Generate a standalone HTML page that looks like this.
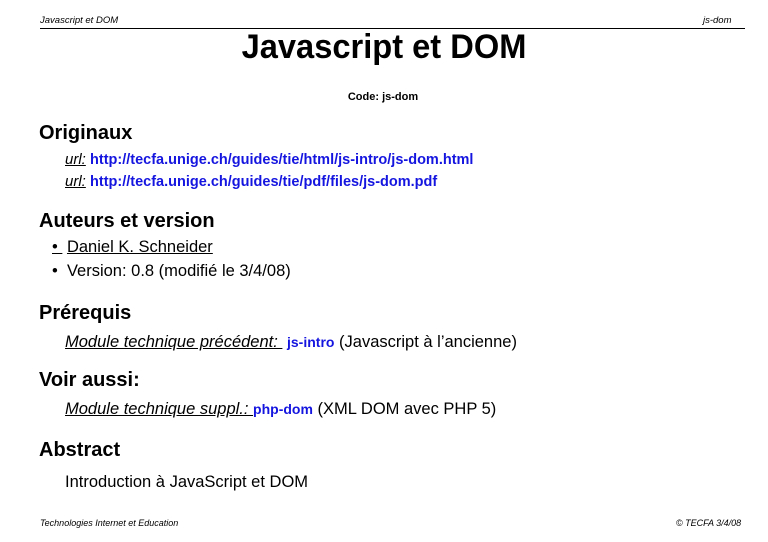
<!DOCTYPE html>
<html><head><meta charset="utf-8"><style>
body{margin:0;width:768px;height:542px;background:#fff;position:relative;font-family:"Liberation Sans",Arial,sans-serif;color:#000;overflow:hidden}
div{position:absolute;white-space:nowrap;line-height:1}
.h{font-size:20px;font-weight:bold;left:39px}
.b{color:#1515e0;font-weight:bold}
.u{text-decoration:underline}
.i{font-style:italic}
.t{font-size:16.5px;left:65px}
</style></head><body>
<div class="i" style="left:40px;top:16px;font-size:9.5px">Javascript et DOM</div>
<div class="i" style="left:703px;top:16px;font-size:9.5px">js-dom</div>
<div style="left:40px;top:28px;width:705px;height:1px;background:#000"></div>
<div style="left:0;width:768px;text-align:center;top:30px;font-size:34px;font-weight:bold;transform:scaleX(0.96)">Javascript et DOM</div>
<div style="left:0;width:766px;text-align:center;top:92px;font-size:11px;font-weight:bold">Code: js-dom</div>
<div class="h" style="top:123px">Originaux</div>
<div style="left:65px;top:152px;font-size:15px"><span class="i u">url:</span> <span class="b" style="font-size:14.5px">http://tecfa.unige.ch/guides/tie/html/js-intro/js-dom.html</span></div>
<div style="left:65px;top:174px;font-size:15px"><span class="i u">url:</span> <span class="b" style="font-size:14.5px">http://tecfa.unige.ch/guides/tie/pdf/files/js-dom.pdf</span></div>
<div class="h" style="top:211px">Auteurs et version</div>
<div style="left:52px;top:239px;font-size:16.5px"><span class="u">•&nbsp;</span> <span class="u">Daniel K. Schneider</span></div>
<div style="left:52px;top:263px;font-size:16.5px">•&nbsp; Version: 0.8 (modifié le 3/4/08)</div>
<div class="h" style="top:303px">Prérequis</div>
<div class="t" style="top:334px"><span class="i u">Module technique précédent:&nbsp;</span> <span class="b" style="font-size:14px">js-intro</span> (Javascript à l’ancienne)</div>
<div class="h" style="top:370px">Voir aussi:</div>
<div class="t" style="top:401px"><span class="i u">Module technique suppl.: </span><span class="b" style="font-size:14px">php-dom</span> (XML DOM avec PHP 5)</div>
<div class="h" style="top:440px">Abstract</div>
<div class="t" style="top:474px">Introduction à JavaScript et DOM</div>
<div class="i" style="left:40px;top:519px;font-size:9px">Technologies Internet et Education</div>
<div class="i" style="left:676px;top:519px;font-size:9px">© TECFA 3/4/08</div>
</body></html>
